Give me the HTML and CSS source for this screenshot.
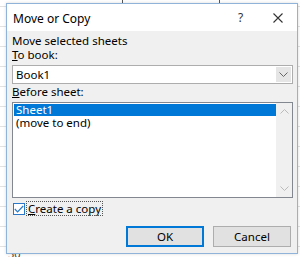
FILE: index.html
```html
<!DOCTYPE html>
<html lang="en">
<head>
    <meta charset="UTF-8">
    <title>Move or Copy</title>
    <link rel="stylesheet" href="styles.css">
</head>
<body>

<div class="sheet-bg">
    <div class="col-line first"></div>
    <div class="col-line second"></div>
    <div class="row-num">30</div>
</div>

<div class="dialog">
    <div class="titlebar">
        <span class="title">Move or Copy</span>
        <span class="help">?</span>
        <span class="close">
            <svg width="10" height="10" viewBox="0 0 10 10"><path d="M0.5 0.5 L9.5 9.5 M9.5 0.5 L0.5 9.5" stroke="#333" stroke-width="1.1" fill="none"/></svg>
        </span>
    </div>
    <div class="content">
        <div class="label">Move selected sheets</div>
        <div class="label"><u>T</u>o book:</div>
        <div class="combo">
            <span class="combo-text">Book1</span>
            <span class="combo-btn">
                <svg width="9" height="5" viewBox="0 0 9 5"><path d="M0.5 0.5 L4.5 4.5 L8.5 0.5" stroke="#666" fill="none"/></svg>
            </span>
        </div>
        <div class="label before"><u>B</u>efore sheet:</div>
        <div class="listbox">
            <div class="items">
                <div class="item selected">Sheet1</div>
                <div class="item">(move to end)</div>
            </div>
            <div class="scrollbar">
                <svg width="9" height="5" viewBox="0 0 9 5"><path d="M0.5 4.5 L4.5 0.5 L8.5 4.5" stroke="#bbb" fill="none"/></svg>
                <svg width="9" height="5" viewBox="0 0 9 5"><path d="M0.5 0.5 L4.5 4.5 L8.5 0.5" stroke="#bbb" fill="none"/></svg>
            </div>
        </div>
        <div class="check-row">
            <span class="checkbox">
                <svg width="10" height="8" viewBox="0 0 10 8"><path d="M0.8 4 L3.6 6.8 L9.2 1" stroke="#2b78c8" stroke-width="1.2" fill="none"/></svg>
            </span>
            <span class="check-label"><u>C</u>reate a copy</span>
        </div>
        <div class="buttons">
            <button class="btn default">OK</button>
            <button class="btn">Cancel</button>
        </div>
    </div>
</div>

</body>
</html>
```

FILE: styles.css
```css
body {
    margin: 0;
    padding: 0;
    width: 300px;
    height: 257px;
    overflow: hidden;
    position: relative;
    font-family: "Noto Sans", "Open Sans", sans-serif;
    font-size: 11.5px;
    color: #000;
    background: #fff;
}
.sheet-bg {
    position: absolute;
    left: 0;
    top: 0;
    width: 300px;
    height: 257px;
    background-color: #fff;
    background-image: linear-gradient(#e2e2e2 1px, transparent 1px);
    background-size: 100% 20px;
    background-position: 0 6px;
}
.col-line {
    position: absolute;
    top: 0;
    width: 1px;
    height: 4px;
    background: #555;
}
.col-line.first {
    left: 122px;
}
.col-line.second {
    left: 219px;
}
.row-num {
    position: absolute;
    left: 8px;
    top: 248px;
    font-size: 11px;
    line-height: 12px;
    color: #444;
}
.dialog {
    position: absolute;
    left: 6px;
    top: 3px;
    width: 290px;
    height: 249px;
    border: 1px solid #8fb3d9;
    background: #f0f0f0;
    box-shadow: 0 0 3px rgba(0, 0, 0, 0.15);
    display: flex;
    flex-direction: column;
}
.titlebar {
    height: 27px;
    background: #fff;
    display: flex;
    align-items: center;
    padding-left: 6px;
}
.title {
    font-size: 12px;
    flex: 1;
    padding-top: 1px;
}
.help {
    width: 20px;
    font-size: 12px;
    color: #333;
    margin-right: 15px;
}
.close {
    width: 10px;
    margin-right: 14px;
    display: flex;
    align-items: center;
}
.content {
    padding: 3px 4px 0 5px;
    display: flex;
    flex-direction: column;
}
.label {
    height: 13px;
    line-height: 13px;
}
.label + .label {
    margin-top: 1px;
}
.combo {
    box-sizing: border-box;
    margin-top: 4px;
    height: 19px;
    width: 281px;
    border: 1px solid #adadad;
    background: #fff;
    display: flex;
    align-items: center;
}
.combo-text {
    flex: 1;
    padding-left: 3px;
}
.combo-btn {
    width: 15px;
    height: 15px;
    margin-right: 1px;
    background: #e5e5e5;
    display: flex;
    align-items: center;
    justify-content: center;
}
.before {
    margin-top: 1px;
}
.listbox {
    box-sizing: border-box;
    margin-top: 4px;
    height: 96px;
    width: 281px;
    border: 1px solid #828790;
    background: #fff;
    display: flex;
}
.items {
    flex: 1;
    padding: 1px 0 0 1px;
}
.item {
    height: 12px;
    line-height: 12px;
    padding-left: 2px;
}
.item + .item {
    margin-top: 1px;
}
.item.selected {
    background: #0078d7;
    color: #fff;
}
.scrollbar {
    width: 16px;
    background: #f0f0f0;
    display: flex;
    flex-direction: column;
    justify-content: space-between;
    align-items: center;
    padding: 6px 0;
}
.check-row {
    margin-top: 4px;
    display: flex;
    align-items: center;
    height: 13px;
}
.checkbox {
    box-sizing: border-box;
    width: 12px;
    height: 12px;
    border: 1px solid #2b78c8;
    background: #fff;
    display: flex;
    align-items: center;
    justify-content: center;
    margin-left: 1px;
}
.check-label {
    margin-left: 2px;
    padding: 0 1px;
    outline: 1px dotted #555;
    line-height: 13px;
}
.buttons {
    display: flex;
    justify-content: flex-end;
    gap: 9px;
    margin-top: 11px;
    padding-right: 2px;
}
.btn {
    box-sizing: border-box;
    width: 78px;
    height: 21px;
    font-family: inherit;
    font-size: 11.5px;
    color: #000;
    background: #e1e1e1;
    border: 1px solid #adadad;
    padding: 0;
}
.btn.default {
    border: 2px solid #0078d7;
}
```
